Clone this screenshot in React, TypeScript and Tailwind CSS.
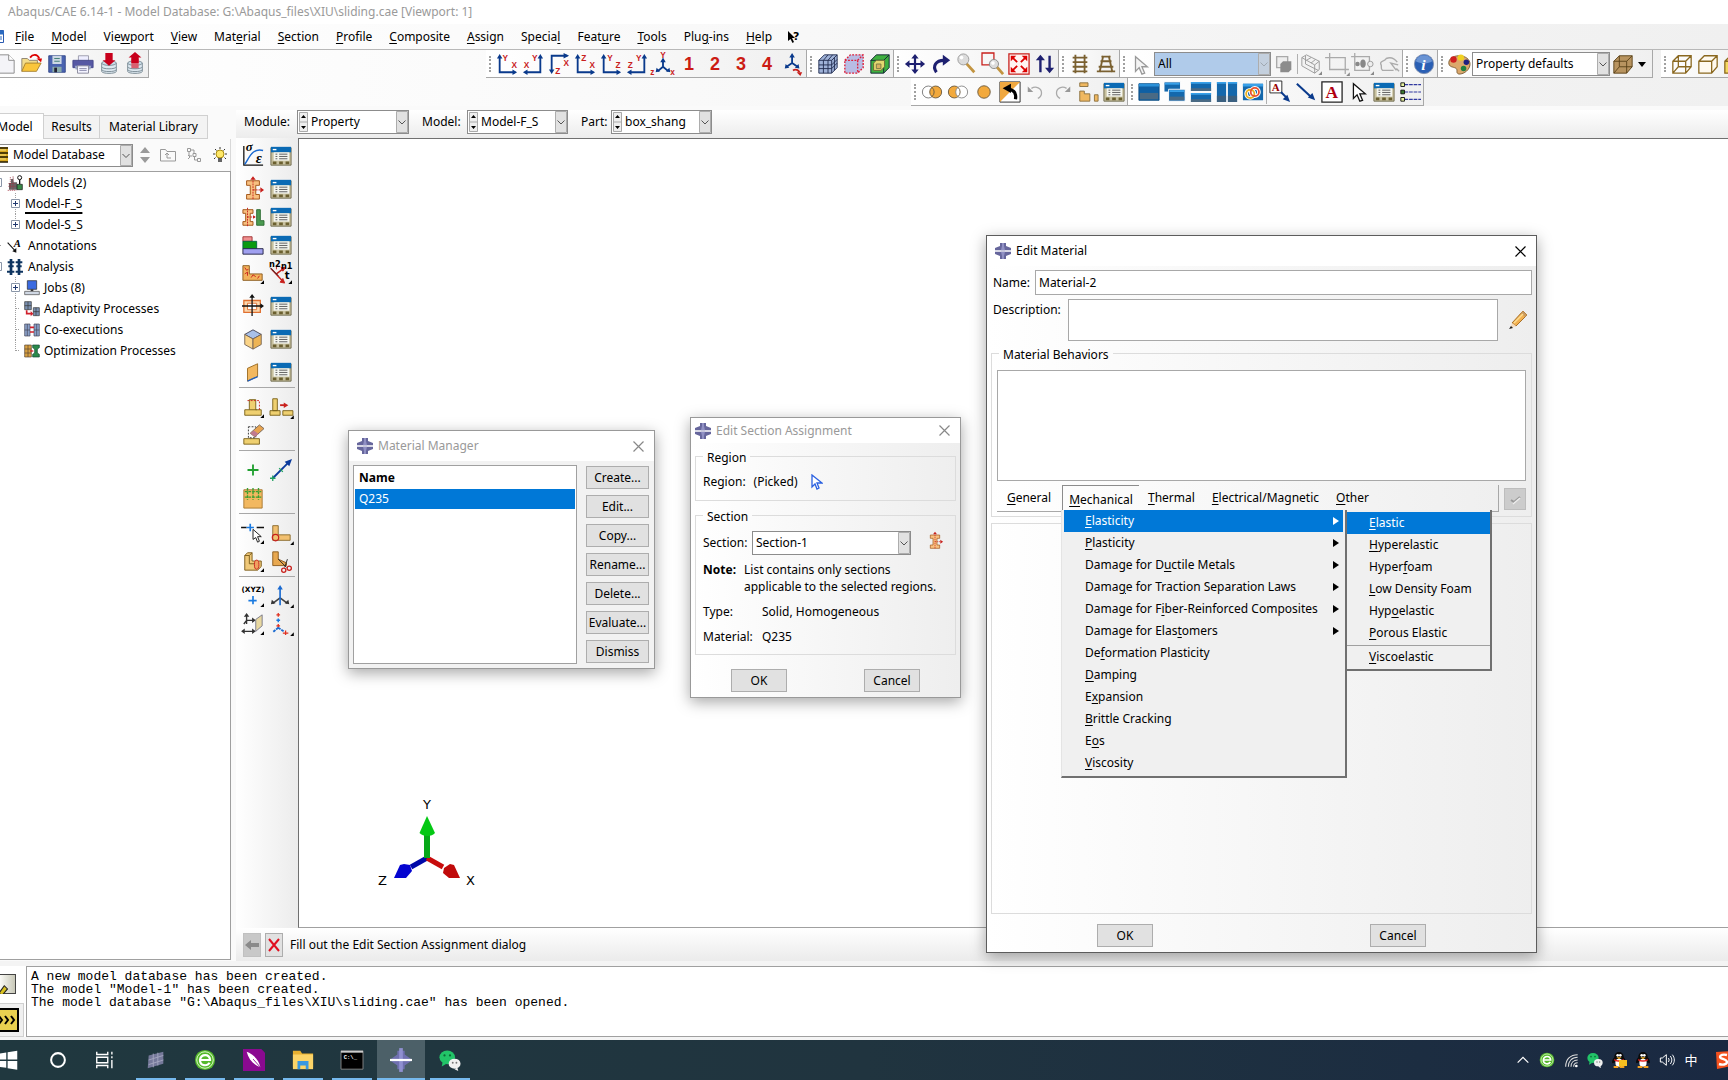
import { useState } from 'react';
import type { ReactNode } from 'react';

type IconProps = { children: ReactNode; size?: 'sm' | 'md' };

// 24 unit grid shared by all toolbar icons
function Icon({ children, size = 'md' }: IconProps)
{
    return (
        <svg className={size === 'sm' ? 'w-4 h-4 shrink-0 overflow-visible' : 'w-6 h-6 shrink-0 overflow-visible'} viewBox="0 0 24 24" fill="none" aria-hidden="true">
            {children}
        </svg>
    );
}

// "&File" -> underlined F
function Mnemonic({ text }: { text: string })
{
    const i = text.indexOf('&');
    if (i < 0) return <>{text}</>;
    return (
        <span className="whitespace-pre">
            {text.slice(0, i)}
            <span className="underline underline-offset-2">{text[i + 1]}</span>
            {text.slice(i + 2)}
        </span>
    );
}

function AbaqusMark()
{
    return (
        <svg className="w-4 h-4 shrink-0" viewBox="0 0 16 16" aria-hidden="true">
            <path d="M5 0h6v3l5 2v2.300H0V5l5-2z" fill="#66669c" />
            <path d="M7 0h2v3l1 4.300H6L7 3z" fill="#9090c4" />
            <path d="M5 16h6v-3l5-2V8.700H0V11l5 2z" fill="#66669c" />
            <path d="M7 16h2v-3l1-4.300H6L7 13z" fill="#9090c4" />
        </svg>
    );
}

const NAVY = '#0a3a8c';
const RED = '#c8201c';

const AxisText = ({ x, y, t }: { x: number; y: number; t: string }) => (
    <text x={x} y={y} fontSize="9" fontWeight="bold" fontFamily="Liberation Sans, sans-serif" fill={RED}>{t}</text>
);

const icons: Record<string, ReactNode> = {
    blank: <><path d="M3 2h13l6 6v14H3z" fill="#f4f4f8" stroke="#888" /><path d="M16 2v6h6" stroke="#888" fill="#fff" /></>,
    open: <><path d="M2 20V6h6l2 2h9v4" fill="#f3dc8a" stroke="#8a8070" /><path d="M2 20l4-9h17l-5 9z" fill="#fbc63c" stroke="#a58030" /><path d="M11 5c3-4 8-4 10 1" stroke="#d00" strokeWidth="2" /><path d="M18 6h6l-1 4z" fill="#d00" /></>,
    save: <><path d="M3 3h18v18H3z" fill="#4a63b0" stroke="#33488a" /><path d="M7 3h10v9H7z" fill="#cdd8e4" /><path d="M9 6h6M9 9h6" stroke="#3a7a70" /><path d="M7 15h10v6H7z" fill="#8aa" /><path d="M9 16h3v5H9z" fill="#223" /></>,
    print: <><path d="M7 3h11v6H7z" fill="#eef" stroke="#99a" /><path d="M1 8h22v8H1z" fill="#5658a4" stroke="#44468a" /><path d="M3 14h18l-1 4H4z" fill="#9aa6c8" /><path d="M6 14h12v8H6z" fill="#f4f4ff" stroke="#889" /><path d="M8 17h8M8 19h8" stroke="#88a" /></>,
    dbIn: <><path d="M4 11v9c0 3 16 3 16 0v-9" fill="#dde8f0" stroke="#7a8a94" /><ellipse cx="12" cy="11" rx="8" ry="2.500" fill="#c9dbe6" stroke="#7a8a94" /><path d="M4 15c0 3 16 3 16 0M4 18c0 3 16 3 16 0" stroke="#7a8a94" /><path d="M8 0h8v8h3l-7 6-7-6h3z" fill="#c8001c" /></>,
    dbOut: <><path d="M4 11v9c0 3 16 3 16 0v-9" fill="#dde8f0" stroke="#7a8a94" /><ellipse cx="12" cy="11" rx="8" ry="2.500" fill="#c9dbe6" stroke="#7a8a94" /><path d="M8 6h8v11H8z" fill="#d86070" /><path d="M4 15c0 3 16 3 16 0M4 18c0 3 16 3 16 0" stroke="#7a8a94" /><path d="M12-1l7 6h-3v6H8V5H5z" fill="#c8001c" /></>,
    yx: <><path d="M4 4v17h17" stroke={NAVY} strokeWidth="2" /><path d="M1 6l3-5 3 5zM18 18l5 3-5 3z" fill={NAVY} /><AxisText x={7} y={9} t="Y" /><AxisText x={17} y={16} t="X" /></>,
    xy: <><path d="M20 4v17H4" stroke={NAVY} strokeWidth="2" /><path d="M17 6l3-5 3 5zM6 18l-5 3 5 3z" fill={NAVY} /><AxisText x={11} y={9} t="Y" /><AxisText x={2} y={16} t="X" /></>,
    xz: <><path d="M4 20V3h17" stroke={NAVY} strokeWidth="2" /><path d="M1 18l3 5 3-5zM17 0l6 3-6 3z" fill={NAVY} /><AxisText x={17} y={14} t="X" /><AxisText x={8} y={23} t="Z" /></>,
    zx: <><path d="M4 4v17h17" stroke={NAVY} strokeWidth="2" /><path d="M1 6l3-5 3 5zM18 18l5 3-5 3z" fill={NAVY} /><AxisText x={8} y={9} t="Z" /><AxisText x={17} y={16} t="X" /></>,
    yz: <><path d="M4 4v17h17" stroke={NAVY} strokeWidth="2" /><path d="M1 6l3-5 3 5zM18 18l5 3-5 3z" fill={NAVY} /><AxisText x={8} y={9} t="Y" /><AxisText x={17} y={16} t="Z" /></>,
    zy: <><path d="M20 4v17H4" stroke={NAVY} strokeWidth="2" /><path d="M17 6l3-5 3 5zM6 18l-5 3 5 3z" fill={NAVY} /><AxisText x={11} y={9} t="Y" /><AxisText x={2} y={16} t="Z" /></>,
    iso: <><path d="M12 15V8M12 15l-6 5M12 15l6 5" stroke={NAVY} strokeWidth="2" /><path d="M9 10l3-5 3 5zM4 21l1-5 4 4zM20 21l-1-5-4 4z" fill={NAVY} /><AxisText x={9} y={5} t="Y" /><AxisText x={-2} y={24} t="z" /><AxisText x={20} y={24} t="x" /></>,
    rotView: <><path d="M11 11V3M11 11l-6 4M11 11l6 4" stroke={NAVY} strokeWidth="2" /><path d="M8 5l3-5 3 5zM3 17l1-5 4 4zM19 17l-1-5-4 4z" fill={NAVY} /><path d="M12 19c3-2 6 0 7 2" stroke={RED} strokeWidth="2" /><path d="M16 21h6l-2 4z" fill={RED} /></>,
    meshCube: <><path d="M2 8l6-6h14v14l-6 6H2z" fill="#9fb2d8" stroke="#222d50" /><path d="M2 8h14v14M16 8l6-6M2 13h14M2 17h14M7 8v14M12 8v14M7 8l5-6M12 8l5-6M19 5v14M16 13l6-6M16 17l6-6" stroke="#222d50" /></>,
    dashCube: <><path d="M2 8l6-6h14v14l-6 6H2z" fill="#b8bce4" /><path d="M2 8l6-6h14v14l-6 6H2zM2 8h14v14M16 8l6-6" stroke="#e0203a" strokeWidth="1.500" strokeDasharray="2 1.500" /></>,
    greenCube: <><path d="M2 8l6-6h14v14l-6 6H2z" fill="#3eb040" stroke="#123" /><path d="M2 8h14v14M16 8l6-6" stroke="#123" /><path d="M5 11l3-3h9v7l-4 4H5z" fill="#e4d870" stroke="#663" /><path d="M8 12h5v5H8z" fill="#d8b060" stroke="#774" /></>,
    pan: <><path d="M12 3v18M3 12h18" stroke="#1e2070" strokeWidth="2.400" /><path d="M8 6l4-5 4 5zM8 18l4 5 4-5zM6 8l-5 4 5 4zM18 8l5 4-5 4z" fill="#1e2070" /></>,
    rotate: <><path d="M7 21C2 14 7 8 15 8" stroke="#1e2070" strokeWidth="3.400" /><path d="M14 2l8 6-8 6z" fill="#1e2070" /></>,
    zoom: <><path d="M11 11l9 10" stroke="#c29440" strokeWidth="3" /><circle cx="8" cy="7" r="6" fill="#dcdcdc" stroke="#999" /><circle cx="6" cy="5" r="2" fill="#fff" /></>,
    boxZoom: <><path d="M0 0h13v13H0z" stroke={RED} strokeWidth="1.400" /><path d="M16 15l7 8" stroke="#c29440" strokeWidth="3" /><circle cx="13" cy="12" r="5" fill="#dcdcdc" stroke="#888" /><circle cx="12" cy="11" r="2" fill="#fff" /></>,
    fit: <><path d="M1 1h22v22H1z" stroke={RED} strokeWidth="1.400" fill="#fff4f2" /><path d="M5 5l5 5M19 5l-5 5M5 19l5-5M19 19l-5-5" stroke="#d00" strokeWidth="2" /><path d="M3 3h6L3 9zM21 3h-6l6 6zM3 21h6l-6-6zM21 21h-6l6-6z" fill="#d00" /></>,
    cycle: <><path d="M7 6v15M17 3v15" stroke="#1e2070" strokeWidth="2.600" /><path d="M2 8l5-6 5 6zM12 16l5 6 5-6z" fill="#1e2070" /></>,
    parallel: <path d="M7 2v20M17 2v20M4 5h16M4 10h16M4 15h16M4 20h16" stroke="#7a6030" strokeWidth="2" />,
    perspective: <path d="M9 3L5 21M15 3l4 18M7 4h10M6 9h12M4 15h16M2 20h20" stroke="#7a6030" strokeWidth="2" />,
    ghostCursor: <path d="M6 4v16l4-4 3 7 3-1-3-7h6z" fill="#f4f4f4" stroke="#999" strokeWidth="1.400" />,
    ghostSel: <><path d="M4 4h12v12H4z" stroke="#aaa" fill="#eee" strokeWidth="1.500" /><path d="M8 12l3-3h9v9l-3 3H8z" fill="#8c8c8c" /></>,
    ghostCube: <><path d="M2 5l5-3 14 7v9l-5 4L2 14z" stroke="#999" fill="#f2f2f2" /><path d="M2 5l14 8v9M16 13l5-4M6 3v9l14 7M7 8l5-3M12 11l5-4" stroke="#999" /><path d="M24 20v4h-4z" fill="#888" /></>,
    ghostBox: <><path d="M4 5h17v13H4zM4 0v9M-1 5h9M21 14v9M16 18h9" stroke="#aaa" strokeWidth="1.400" /><path d="M26 21v4h-4z" fill="#888" /></>,
    ghostNodes: <><path d="M3 4h16v15H3zM3 0v8M-1 4h8" stroke="#aaa" strokeWidth="1.400" /><circle cx="6" cy="12" r="2.500" fill="#888" /><path d="M12 7c4 0 4 9 0 9s-4-9 0-9z" fill="#888" /><circle cx="20" cy="12" r="3" fill="#eee" stroke="#999" /><path d="M24 20v4h-4z" fill="#888" /></>,
    ghostLasso: <path d="M20 17l3 3M22 13l-8-2 6 8M17 19H5c-3-2 0-4-2-7-1-4 4-2 6-6 5-2 9 0 12 4" stroke="#aaa" strokeWidth="1.500" />,
    info: <><circle cx="12" cy="12" r="10.500" fill="#2a5fb4" stroke="#8090b0" /><path d="M3 9a9.500 9.500 0 0 1 18 0c-5 3-12 3-18 0z" fill="#6a94d4" /><text x="9" y="18" fontSize="17" fontStyle="italic" fontWeight="bold" fontFamily="Liberation Serif, serif" fill="#fff">i</text></>,
    palette: <><path d="M12 3C5 3 0 7 1 12c1 4 6 3 8 5s-1 5 3 6c6 0 12-5 12-11 0-5-5-9-12-9z" fill="#dca86c" stroke="#7a5a30" /><circle cx="6" cy="7" r="3.500" fill="#d02020" /><circle cx="14" cy="5" r="3.500" fill="#f0d020" /><circle cx="20" cy="10" r="3" fill="#202080" /><circle cx="17" cy="17" r="3" fill="#208040" /></>,
    brownCube: <><path d="M2 9l6-6h14v12l-6 7H2z" fill="#b89460" stroke="#5a4218" /><path d="M2 9h14v13M16 9l6-6M8 3v12l-6 7M8 15h14" stroke="#5a4218" /></>,
    wireCube: <path d="M2 9l6-6h14v12l-6 7H2zM2 9h14v13M16 9l6-6M8 3v12l-6 7M8 15h14" stroke="#8a6820" strokeWidth="1.400" />,
    hiddenCube: <path d="M2 9l6-6h14v12l-6 7H2zM2 9h14v13M16 9l6-6" stroke="#8a6820" strokeWidth="1.400" fill="#fffaf0" />,
    solidCube: <path d="M2 9l6-6h14v12l-6 7H2zM2 9h14v13M16 9l6-6" stroke="#8a6820" strokeWidth="1.400" fill="#f4d860" />,
    union: <><circle cx="8" cy="12" r="6.500" fill="#fff" stroke="#777" /><circle cx="16" cy="12" r="6.500" fill="#f2a93c" stroke="#6a5a40" /><path d="M12 7a6.500 6.500 0 0 1 0 10" stroke="#6a5a40" /></>,
    subtract: <><circle cx="8" cy="12" r="6.500" fill="#f2a93c" stroke="#6a5a40" /><circle cx="16" cy="12" r="6.500" fill="#fff" stroke="#888" /><path d="M12 7a6.500 6.500 0 0 1 0 10" stroke="#6a5a40" /></>,
    circle: <circle cx="12" cy="12" r="6.800" fill="#f2a93c" stroke="#6a5a40" />,
    replace: <><path d="M1 1h22v22H1z" fill="#fff" stroke="#222" /><path d="M1 1h22L1 23z" fill="#f0a840" /><path d="M18 20c1-6-1-10-7-11" stroke="#000" strokeWidth="3.500" /><path d="M4 8l9-5v10z" fill="#000" /></>,
    undo: <><path d="M7 8c5-3 11 0 11 5 0 3-2 5-4 6" stroke="#aaa" strokeWidth="1.400" /><path d="M3 6v6h6z" fill="#999" /></>,
    redo: <><path d="M17 8c-5-3-11 0-11 5 0 3 2 5 4 6" stroke="#aaa" strokeWidth="1.400" /><path d="M21 6v6h-6z" fill="#999" /></>,
    tree: <path d="M3 2h9v4H3zM3 11h5v3h6v8H3zM19 15h4v7h-4z" fill="#f0b860" stroke="#8a7040" />,
    vp1: <><path d="M1 3h22v18H1z" fill="#1060a4" stroke="#0a4a80" /><path d="M1 3h22v3H1z" fill="#2a90d8" /><path d="M2 13h20v7H2z" fill="#4a6a84" /></>,
    vp2: <><path d="M0 1h18v11H0z" fill="#1468ac" stroke="#fff" /><path d="M1 2h16v2H1z" fill="#38a0e8" /><path d="M5 9h18v13H5z" fill="#1468ac" stroke="#fff" /><path d="M6 10h16v2H6z" fill="#38a0e8" /><path d="M6 17h16v4H6z" fill="#4a6a84" /></>,
    vp3: <><path d="M1 1h22v10H1zM1 13h22v10H1z" fill="#1468ac" /><path d="M1 1h22v2H1zM1 13h22v2H1z" fill="#38a0e8" /><path d="M1 8h22v3H1zM1 20h22v3H1z" fill="#4a6a84" /></>,
    vp4: <><path d="M1 1h10v22H1zM13 1h10v22H13z" fill="#1468ac" /><path d="M1 1h10v2H1zM13 1h10v2H13z" fill="#38a0e8" /><path d="M1 16h10v7H1zM13 16h10v7H13z" fill="#3a6080" /></>,
    vpLink: <><path d="M1 3h22v18H1z" fill="#1468ac" /><path d="M1 3h22v3H1z" fill="#38a0e8" /><circle cx="9" cy="14" r="4.500" stroke="#fff" strokeWidth="4" /><circle cx="14" cy="12" r="4.500" stroke="#fff" strokeWidth="4" /><circle cx="9" cy="14" r="4.500" stroke="#e8b020" strokeWidth="2" /><circle cx="14" cy="12" r="4.500" stroke="#e85030" strokeWidth="2" /></>,
    annot: <><path d="M1 0h13v13H1z" fill="#fff" stroke="#222" /><text x="3" y="11" fontSize="12" fontWeight="bold" fontFamily="Liberation Serif, serif" fill="#900">A</text><path d="M13 12l6 6" stroke={NAVY} strokeWidth="2" /><path d="M23 23l-8-3 5-5z" fill={NAVY} /></>,
    arrow: <><path d="M2 3l15 14" stroke={NAVY} strokeWidth="2.200" /><path d="M22 21l-8-3 5-5z" fill={NAVY} /></>,
    letter: <><path d="M1 1h22v22H1z" fill="#fff" stroke="#222" strokeWidth="1.400" /><text x="5" y="18" fontSize="19" fontWeight="bold" fontFamily="Liberation Serif, serif" fill="#b00010">A</text></>,
    cursor: <path d="M7 3v16l4-4 3 7 3-1-3-7h6z" fill="#fff" stroke="#111" strokeWidth="1.400" />,
    list: <><path d="M6 4h18M6 12h18M6 20h18" stroke="#3038a0" strokeWidth="1.300" strokeDasharray="4 1" /><path d="M2 2h4v4H2zM2 18h4v4H2z" fill="#e8f4a0" stroke="#111" /><path d="M2 10h4v4H2z" fill="#3a7a30" stroke="#111" /></>,
    table: <><path d="M1 3h22v19H1z" fill="#c9c2a0" stroke="#6b6748" /><path d="M1 2h22v6H1z" fill="#0a6ab4" /><path d="M3 5h4" stroke="#fff" strokeWidth="1.500" /><path d="M4 8h17v9H4z" fill="#f4f6f0" /><path d="M6 10h2M6 12.500h2M6 15h2M10 10h9M10 12.500h9M10 15h9" stroke="#555" /><path d="M3 18h4v3H3zM10 18h4v3h-4zM17 18h4v3h-4z" fill="#6b6030" /></>,
    curve: <><path d="M2 1v21h21" stroke="#111" strokeWidth="1.400" /><path d="M3 21C8 14 11 3 23 6" stroke="#1a6ad0" strokeWidth="1.600" /><text x="4" y="7" fontSize="14" fontStyle="italic" fontWeight="bold" fontFamily="Liberation Serif, serif" fill="#000">σ</text><text x="15" y="20" fontSize="16" fontStyle="italic" fontWeight="bold" fontFamily="Liberation Serif, serif" fill="#000">ε</text></>,
    section: <><path d="M5 3h14v5h-4v10h4v5H5v-5h4V8H5z" fill="#f8c080" stroke="#a05010" /><path d="M12 0v23M12 13h11" stroke={RED} strokeDasharray="2 1" /><path d="M9 2l3-4 3 4zM20 10l4 3-4 3z" fill={RED} /></>,
    assign: <><path d="M1 4h11v4H9v9h3v4H1v-4h3V8H1z" fill="#f8c080" stroke="#a05010" /><path d="M6 2v21M6 12h8" stroke={RED} strokeDasharray="2 1" /><path d="M12 10l3 2-3 2z" fill={RED} /><path d="M16 4h4v12h4v5h-8z" fill="#4a9a50" stroke="#2a6a30" /></>,
    ply: <><path d="M1 3h10v5H1z" fill="#f09090" stroke="#a03030" /><path d="M1 8h15v8H1z" fill="#0a9a10" stroke="#064" /><path d="M1 16h22v6H1z" fill="#a0a0f0" stroke="#224" /></>,
    beam: <><path d="M1 4h7v9h14v7H1z" fill="#f2b25c" stroke="#8a5a1c" /><path d="M3 6l2 3 2-1M3 13l3-2v4M10 17l2-3 3 2M17 18l2-3" stroke={RED} /><path d="M24 20v4h-4z" fill="#000" /></>,
    tangent: <><path d="M1 7l14 15M7 13l8-6" stroke={RED} strokeWidth="1.600" /><path d="M0 6l9 9" stroke="#222" /><path d="M16 23l-5-1 3-4zM17 6l-5 0 2 4zM7 8V5" fill={RED} stroke={RED} /><text x="-1" y="5" fontSize="9" fontWeight="bold" fontFamily="DejaVu Sans, sans-serif" fill="#000">n2</text><text x="12" y="8" fontSize="9" fontWeight="bold" fontFamily="DejaVu Sans, sans-serif" fill="#000">n1</text><text x="16" y="19" fontSize="11" fontWeight="bold" fontFamily="DejaVu Sans, sans-serif" fill="#000">t</text><path d="M24 20v4h-4z" fill="#000" /></>,
    orient: <><path d="M2 6h18v13H2z" fill="#fbd9b0" stroke="#e07030" strokeWidth="1.400" /><path d="M6 9h10v7H6z" fill="#fff" stroke="#e07030" /><path d="M11 1v22M0 12h22" stroke="#111" strokeWidth="1.400" /><path d="M8 3l3-4 3 4zM20 9l4 3-4 3z" fill="#111" /></>,
    cube: <><path d="M12 2l9 5-9 5-9-5z" fill="#a8c0e8" stroke="#445" /><path d="M3 7l9 5v11l-9-5z" fill="#fbd488" stroke="#765" /><path d="M21 7l-9 5v11l9-5z" fill="#eeb454" stroke="#765" /></>,
    plane: <><path d="M6 8l11-5v14L6 22z" fill="#f2b860" stroke="#9a6a20" /><path d="M6 22l11-5" stroke="#2060c0" strokeWidth="1.500" /></>,
    extrude: <><path d="M8 4h7v11h6v6H3v-6h5z" fill="#efd070" stroke="#7a6018" /><path d="M6 5h13v11" stroke={RED} strokeDasharray="2 1.500" /><path d="M8 15h8" stroke="#7a6018" /><path d="M24 20v4h-4z" fill="#000" /></>,
    extend: <><path d="M3 3h5v13H3zM0 16h11v5H0zM14 16h11v5H14z" fill="#efd070" stroke="#7a6018" /><path d="M11 10h6" stroke={RED} strokeWidth="2" /><path d="M15 7l5 3-5 3z" fill={RED} /><path d="M26 21v4h-4z" fill="#000" /></>,
    erase: <><path d="M2 16h17v6H2z" fill="#efd070" stroke="#7a6018" /><path d="M7 3h8v12H7z" stroke="#333" strokeDasharray="2 1.500" /><path d="M9 10l10-9 5 4-10 9z" fill="#e8a450" stroke="#765" /><path d="M9 10l4-3 5 4-4 3z" fill="#c07a90" /></>,
    plus: <path d="M12 6v12M6 12h12" stroke="#20a030" strokeWidth="2" />,
    line: <><path d="M3 21L20 4" stroke="#0a3a9c" strokeWidth="2" /><path d="M24 0l-3 8-5-5z" fill="#0a3a9c" /><path d="M3 18v6M0 21h6M10 10l4 4" stroke="#20a060" strokeWidth="1.400" /></>,
    grid: <><path d="M2 3h20v20H2z" fill="#f2b860" stroke="#a87830" /><path d="M6 1v13M12 1v13M18 1v13M3 5h18M3 11h18" stroke="#3aa030" strokeWidth="1.500" strokeDasharray="3 1" /></>,
    pick: <><path d="M-1 6h6M16 6h8" stroke="#111" strokeWidth="1.600" /><path d="M9 2v8M5 6h8" stroke="#1a7ae0" strokeWidth="1.800" /><path d="M12 8v11l3-2 2 5 2-1-2-5h4z" fill="#fff" stroke="#111" /><path d="M24 20v4h-4z" fill="#000" /></>,
    corner: <><path d="M3 4h6v10h13v6H3z" fill="#f2c070" stroke="#8a6a2c" /><circle cx="6" cy="17" r="3.500" stroke={RED} strokeWidth="1.300" /><path d="M26 21v4h-4z" fill="#000" /></>,
    partition: <><path d="M3 6l3-3h5v9h10v6l-4 4H3z" fill="#efc878" stroke="#7a5a18" /><path d="M3 6h5v9h10M8 6l3-3" stroke="#7a5a18" /><ellipse cx="16" cy="16" rx="2.500" ry="5" stroke={RED} fill="#f0a060" /><path d="M24 20v4h-4z" fill="#000" /></>,
    cut: <><path d="M3 2h6v8l9 4v3H3z" fill="#e8a850" stroke="#8a5a1c" /><path d="M9 10l9 9M19 10l-3 9" stroke="#222" /><circle cx="15" cy="22" r="2.300" stroke={RED} strokeWidth="1.400" /><circle cx="21" cy="20" r="2.300" stroke={RED} strokeWidth="1.400" /></>,
    xyz: <><text x="12" y="8" textAnchor="middle" fontSize="8" fontWeight="bold" fontFamily="DejaVu Sans, sans-serif" fill="#000">(XYZ)</text><path d="M12 12v9M7 17h9" stroke="#1a7ae0" strokeWidth="1.800" /><path d="M24 20v4h-4z" fill="#000" /></>,
    csys: <><path d="M11 14l-8 6M11 14l8 6" stroke="#444" strokeWidth="1.800" /><path d="M11 22V3" stroke="#1a6ad0" strokeWidth="1.800" /><path d="M8 5l3-5 3 5z" fill="#1a6ad0" /><path d="M1 21l1-5 4 4zM21 21l-1-5-4 4z" fill="#333" /><path d="M26 21v4h-4z" fill="#000" /></>,
    planeAxes: <><path d="M5 12V3M5 8h8M2 12l3-4M2 20h10" stroke="#333" strokeWidth="1.500" /><path d="M2 4l3-4 3 4zM11 5l4 3-4 3zM3 17l-4 3 4 3zM11 17l4 3-4 3z" fill="#333" /><path d="M15 7l7-5v12l-7 6z" fill="#e8d8a0" stroke="#778" /><path d="M24 20v4h-4z" fill="#000" /></>,
    points: <><path d="M9 0v4M7 2h4M9 12v4M7 14h4M17 19v5M14 22h6" stroke="#e03020" strokeWidth="1.400" /><path d="M9 6v4M7 8h4" stroke="#1a7ae0" strokeWidth="1.600" /><path d="M9 16l-6 5M9 16l6 4" stroke="#1a6ad0" strokeWidth="2" strokeDasharray="3 1" /><path d="M26 21v4h-4z" fill="#000" /></>,
    console: <><path d="M0 2h24v20H0z" fill="#000" stroke="#888" /><path d="M0 2h24v2H0z" fill="#ccc" /><text x="3" y="11" fontSize="6" fontWeight="bold" fontFamily="Liberation Mono, monospace" fill="#fff">C:\_</text></>,
};

function ToolButton({ name }: { name: string })
{
    return (
        <button type="button" aria-label={name} className="w-[26px] h-[27px] shrink-0 flex items-center justify-center">
            {/^\d$/.test(name)
                ? <span className="font-['Liberation_Sans',sans-serif] text-lg font-bold text-[#cc1c14]">{name}</span>
                : <svg className="w-[22px] h-[22px] overflow-visible" viewBox="0 0 24 24" fill="none" aria-hidden="true">{icons[name]}</svg>}
        </button>
    );
}

function ToolGroup({ names, children, handle = true, className = '' }: { names?: string[]; children?: ReactNode; handle?: boolean; className?: string })
{
    return (
        <div className={`h-7 flex items-center shrink-0 border-b border-r border-[#a8a8a8] bg-linear-to-r from-white to-[#f0f0f0] ${className}`}>
            {handle && <span className="w-2 h-4 shrink-0 flex justify-center"><span className="border-l-2 border-dotted border-[#a0a0a0]" /></span>}
            {names?.map((n) => <ToolButton key={n} name={n} />)}
            {children}
        </div>
    );
}

type SelectProps = { id: string; value: string; width: string; spinner?: boolean; tone?: string };

function Select({ id, value, width, spinner, tone = 'bg-white' }: SelectProps)
{
    return (
        <div className={`relative h-6 shrink-0 flex items-center border border-[#8c8c8c] ${tone} ${width}`}>
            {spinner && (
                <svg className="w-[9px] h-5 ml-px shrink-0 bg-[#eee]" viewBox="0 0 9 20" aria-hidden="true">
                    <path d="M.5.5h8v19h-8zM.5 10h8" fill="none" stroke="#aaa" />
                    <path d="M2 6h5L4.500 3zM2 14h5l-2.500 3z" fill="#000" />
                </svg>
            )}
            <select id={id} defaultValue={value} className="appearance-none w-full h-full pl-[3px] pr-3 bg-transparent outline-none">
                <option>{value}</option>
            </select>
            <svg className="absolute right-0 inset-y-0 w-3 h-full pointer-events-none" viewBox="0 0 12 22" aria-hidden="true">
                <path d="M.5.5h11v21H.5z" fill={tone === 'bg-white' ? '#e1e1e1' : '#c4d0de'} stroke="#adadad" />
                <path d="M2.500 9.500L6 13l3.500-3.500" fill="none" stroke={tone === 'bg-white' ? '#555' : '#a0a8b0'} />
            </svg>
        </div>
    );
}

function PushButton({ children, width = 'w-14' }: { children: ReactNode; width?: string })
{
    return <button type="button" className={`h-[23px] shrink-0 border border-[#adadad] bg-[#e1e1e1] leading-none whitespace-nowrap ${width}`}>{children}</button>;
}

const mainMenu = ['&File', '&Model', 'Vie&wport', '&View', 'Mat&erial', '&Section', '&Profile', '&Composite', '&Assign', 'Specia&l', 'Feat&ure', '&Tools', 'Plu&g-ins', '&Help'];

function Toolbars()
{
    return (
        <div className="bg-linear-to-r from-white to-[#f0f0f0] overflow-hidden">
            <div className="flex border-t border-[#b8b8b8]">
                <ToolGroup handle={false} className="-ml-2" names={['blank', 'open', 'save', 'print', 'dbIn', 'dbOut']} />
                <ToolGroup className="ml-[337px]" names={['yx', 'xy', 'xz', 'zx', 'yz', 'zy', 'iso', '1', '2', '3', '4', 'rotView']} />
                <ToolGroup names={['meshCube', 'dashCube', 'greenCube']} />
                <ToolGroup names={['pan', 'rotate', 'zoom', 'boxZoom', 'fit', 'cycle']} />
                <ToolGroup names={['parallel', 'perspective']} />
                <ToolGroup>
                    <ToolButton name="ghostCursor" />
                    <label htmlFor="filter" className="sr-only">Selection filter</label>
                    <Select id="filter" value="All" width="w-[117px]" tone="bg-[#b0cbea]" />
                    <ToolButton name="ghostSel" />
                    <span className="w-px h-5 bg-[#b0b0b0]" />
                    {['ghostCube', 'ghostBox', 'ghostNodes', 'ghostLasso'].map((n) => <ToolButton key={n} name={n} />)}
                </ToolGroup>
                <ToolGroup names={['info']} />
                <ToolGroup names={['palette']}>
                    <label htmlFor="colors" className="sr-only">Color mapping</label>
                    <Select id="colors" value="Property defaults" width="w-[138px]" />
                    <ToolButton name="brownCube" />
                    <svg className="w-3 h-3 mr-1" viewBox="0 0 12 12" aria-hidden="true"><path d="M2 4h8L6 9z" fill="#000" /></svg>
                </ToolGroup>
                <ToolGroup className="ml-2" names={['wireCube', 'hiddenCube', 'solidCube']} />
            </div>
            <div className="flex">
                <ToolGroup className="ml-[911px]" names={['union', 'subtract', 'circle', 'replace', 'undo', 'redo', 'tree', 'table']} />
                <ToolGroup names={['vp1', 'vp2', 'vp3', 'vp4', 'vpLink']}>
                    <span className="w-px h-6 bg-[#b0b0b0]" />
                    {['annot', 'arrow', 'letter', 'cursor', 'table', 'list'].map((n) => <ToolButton key={n} name={n} />)}
                </ToolGroup>
            </div>
        </div>
    );
}

const treeIcons: Record<string, ReactNode> = {
    models: <><path d="M3 22V12h3V6h3V1l1 10h5v11z" fill="#666" /><path d="M1 23h13M5 3v18M9 2v20M2 13h12M2 17h12" stroke="#a03040" strokeDasharray="2 1" /><circle cx="19" cy="4" r="3" stroke="#111" strokeWidth="1.500" /><path d="M19 7v7" stroke="#111" strokeWidth="2" /><path d="M15 14h8v8h-8z" fill="#3a8a4a" stroke="#111" /></>,
    annotations: <><path d="M1 7l12 13" stroke="#111" strokeWidth="1.600" /><path d="M14 22v-7l-6 5z" fill="#111" /><text x="10" y="13" fontSize="16" fontWeight="bold" fontStyle="italic" fontFamily="Liberation Serif, serif" fill="#000">A</text></>,
    analysis: <><path d="M6 0v24M18 0v24" stroke="#0e3560" strokeWidth="4" /><path d="M1 5h10M13 5h10M2 11h8M14 11h8M0 19h11M13 19h11" stroke="#0e3560" strokeWidth="3" /></>,
    jobs: <><path d="M5 1h14v13H5z" fill="#3a6ae0" stroke="#222" /><path d="M10 14h4v3h-4z" fill="#333" /><path d="M1 17h22v5H1z" fill="#d0d8e4" stroke="#444" /></>,
    adaptivity: <><path d="M1 1h10v12H1z" fill="#7a90b0" stroke="#333" /><path d="M14 10h9v12h-9z" fill="#7a90b0" stroke="#333" /><path d="M6 1v12M1 7h10M18 10v12M14 16h9" stroke="#333" /><path d="M4 14v5h8" stroke="#d0202c" strokeWidth="2.500" /><path d="M10 15l4 4-4 4z" fill="#d0202c" /></>,
    coexec: <><path d="M1 3h8v18H1zM15 3h8v18h-8z" fill="#8aa0c8" stroke="#445" /><path d="M5 3v18M19 3v18M1 12h8M15 12h8" stroke="#445" /><path d="M9 8h6M9 15h6" stroke="#d0202c" strokeWidth="2.500" /></>,
    optim: <><path d="M1 3h10v18H1z" fill="#d8a040" stroke="#543" /><path d="M1 9h10M1 15h10M6 3v18" stroke="#543" /><path d="M13 3h10v4l-3 2v6l3 2v4H13v-4l3-2V9l-3-2z" fill="#2a8a4a" stroke="#143" /><path d="M9 12h5" stroke="#d0202c" strokeWidth="2" /></>,
};

type BranchKind = 'edge' | 'stub' | 'plus' | 'plusLast' | 'leaf' | 'leafLast';

// One tree row's worth of connector lines, with the expand box where there is one
function Branch({ kind }: { kind: BranchKind })
{
    if (kind === 'edge' || kind === 'stub')
    {
        return (
            <svg className="w-0.5 h-[21px] shrink-0" viewBox="0 0 2 21" fill="none" aria-hidden="true">
                {kind === 'edge' ? <path d="M0 6.500h1.500v8H0" stroke="#8a96a8" /> : <path d="M0 10.500h1" stroke="#a0a0a0" />}
            </svg>
        );
    }
    const last = kind === 'plusLast' || kind === 'leafLast';
    return (
        <svg className="w-[9px] h-[21px] shrink-0" viewBox="0 0 9 21" fill="none" aria-hidden="true">
            <path d={last ? 'M4.500 0v11' : 'M4.500 0v21'} stroke="#a0a0a0" strokeDasharray="1 1" />
            {kind.startsWith('leaf')
                ? <path d="M5 10.500h4" stroke="#a0a0a0" strokeDasharray="1 1" />
                : <><path d="M.5 6.500h8v8h-8z" fill="#fff" stroke="#8a96a8" /><path d="M2 10.500h5M4.500 8v5" stroke="#223a70" /></>}
        </svg>
    );
}

const treeRows: { label: string; icon?: string; row: string; branch: BranchKind; current?: boolean }[] = [
    { label: 'Models (2)', icon: 'models', row: 'gap-[5px]', branch: 'edge' },
    { label: 'Model-F_S', row: 'pl-[11px] gap-[5px]', branch: 'plus', current: true },
    { label: 'Model-S_S', row: 'pl-[11px] gap-[5px]', branch: 'plusLast' },
    { label: 'Annotations', icon: 'annotations', row: 'gap-[5px]', branch: 'stub' },
    { label: 'Analysis', icon: 'analysis', row: 'gap-[5px]', branch: 'edge' },
    { label: 'Jobs (8)', icon: 'jobs', row: 'pl-[11px] gap-1', branch: 'plus' },
    { label: 'Adaptivity Processes', icon: 'adaptivity', row: 'pl-[11px] gap-1', branch: 'leaf' },
    { label: 'Co-executions', icon: 'coexec', row: 'pl-[11px] gap-1', branch: 'leaf' },
    { label: 'Optimization Processes', icon: 'optim', row: 'pl-[11px] gap-1', branch: 'leafLast' },
];

function ModelTree()
{
    return (
        <aside className="w-[231px] shrink-0 flex flex-col pt-[7px] pb-px">
            <div role="tablist" className="h-[26px] flex items-end overflow-hidden">
                <button role="tab" type="button" aria-selected="true" className="-ml-2.5 w-[54px] h-[26px] pr-1 border border-b-0 border-[#d0d0d0] bg-white">Model</button>
                <button role="tab" type="button" className="w-14 h-6 border border-l-0 border-[#d0d0d0] bg-[#f3f3f3]">Results</button>
                <button role="tab" type="button" className="w-[108px] h-6 border border-l-0 border-[#d0d0d0] bg-[#f3f3f3]">Material Library</button>
            </div>
            <div className="h-8 flex items-center border-r border-[#d8d8d8]">
                <div className="flex items-center w-[134px] h-[23px] -ml-px border border-[#8c8c8c] bg-white">
                    <svg className="w-2.5 h-4 shrink-0" viewBox="0 0 10 16" aria-hidden="true">
                        <path d="M0 0h8v15H0z" fill="#d8a820" /><path d="M0 1h8M0 6h8M0 10h8M0 15h8" stroke="#221a00" strokeWidth="1.500" /><path d="M0 3h6M0 8h6M0 12h6" stroke="#f8e080" />
                    </svg>
                    <div className="relative flex-1 h-full">
                        <label htmlFor="tree-root" className="sr-only">Tree root</label>
                        <select id="tree-root" className="appearance-none w-full h-full pl-[3px] bg-transparent outline-none"><option>Model Database</option></select>
                        <svg className="absolute right-0 inset-y-0 w-3 h-full pointer-events-none" viewBox="0 0 12 21" aria-hidden="true">
                            <path d="M.5.5h11v20H.5z" fill="#e1e1e1" stroke="#adadad" /><path d="M2.500 9L6 12.500 9.500 9" fill="none" stroke="#555" />
                        </svg>
                    </div>
                </div>
                <div className="flex-1 flex items-center justify-between pl-[7px] pr-0.5">
                    <svg className="w-2.5 h-4" viewBox="0 0 10 16" aria-hidden="true"><path d="M0 6h10L5 0zM0 10h10l-5 6z" fill="#9a9a9a" /></svg>
                    <svg className="w-4 h-4" viewBox="0 0 16 16" fill="none" stroke="#999" aria-hidden="true"><path d="M.5 14V2.500h5L7 4.500h8.500V14z" /><path d="M5 8l2-2 2 2M7 6v5h4" /></svg>
                    <svg className="w-4 h-4" viewBox="0 0 16 16" fill="none" stroke="#999" aria-hidden="true"><path d="M1.500 1.500h3v3h-3zM7 6.500h3v3H7zM11.500 11.500h3v3h-3zM3 5v4h3M8.500 10v3H11M5 3h3v3M2 8l2 2-2 2" /></svg>
                    <svg className="w-4 h-4" viewBox="0 0 16 16" fill="none" aria-hidden="true"><circle cx="8" cy="7" r="4" fill="#ffe868" stroke="#a88a10" /><path d="M6 12h4M6 14h4" stroke="#333" strokeWidth="1.500" /><path d="M8 0v2M1 7h2M13 7h2M3 2l1.500 1.500M13 2l-1.500 1.500M2 12l1.500-1.500M14 12l-1.500-1.500" stroke="#333" /></svg>
                </div>
            </div>
            <ul className="flex-1 bg-white border border-l-0 border-[#a0a0a0]">
                {treeRows.map((r) => (
                    <li key={r.label} className={`h-[21px] flex items-center whitespace-nowrap ${r.row}`}>
                        <Branch kind={r.branch} />
                        {r.icon && <Icon size="sm">{treeIcons[r.icon]}</Icon>}
                        <span className={r.current ? 'underline decoration-2 underline-offset-4' : ''}>{r.label}</span>
                    </li>
                ))}
            </ul>
        </aside>
    );
}

const toolboxMain = [
    [['curve', 'table']],
    [['section', 'table'], ['assign', 'table'], ['ply', 'table'], ['beam', 'tangent']],
    [['orient', 'table']],
    [['cube', 'table']],
    [['plane', 'table']],
];

const toolboxMore = [
    [['extrude', 'extend'], ['erase', '']],
    [['plus', 'line'], ['grid', '']],
    [['pick', 'corner'], ['partition', 'cut']],
    [['xyz', 'csys'], ['planeAxes', 'points']],
];

function ToolboxRow({ row }: { row: string[] })
{
    return (
        <div className="flex h-7">
            {row.map((n, i) => n && (
                <button key={i} type="button" aria-label={n} className="w-7 h-7 flex items-center justify-center">
                    <svg className="w-[22px] h-[22px] overflow-visible" viewBox="0 0 24 24" fill="none" aria-hidden="true">{icons[n]}</svg>
                </button>
            ))}
        </div>
    );
}

function Toolbox()
{
    return (
        <div className="w-[62px] shrink-0 px-[3px] pt-1 bg-linear-to-r from-white to-[#ececec]">
            <div className="flex flex-col gap-[5px] pb-px border-b border-[#a8a8a8]">
                {toolboxMain.map((block, i) => <div key={i}>{block.map((row, j) => <ToolboxRow key={j} row={row} />)}</div>)}
            </div>
            {toolboxMore.map((block, i) => (
                <div key={i} className="pt-[5px] pb-px border-b border-[#a8a8a8] last:border-b-0">
                    {block.map((row, j) => <ToolboxRow key={j} row={row} />)}
                </div>
            ))}
        </div>
    );
}

function Triad()
{
    return (
        <svg className="w-[110px] h-[100px] ml-[74px] mb-[30px] overflow-visible" viewBox="0 0 110 100" fill="none" fontFamily="DejaVu Sans, sans-serif" fontSize="13" aria-label="View triad">
            <path d="M54 61L38 70" stroke="#0008a8" strokeWidth="5" />
            <path d="M54 61l16 9" stroke="#c80c0c" strokeWidth="5" />
            <path d="M54 61V36" stroke="#06a818" strokeWidth="6" />
            <path d="M46.500 36L54 19l8 17c-3 4-12 4-15.500 0z" fill="#04c814" />
            <path d="M21 81l6-13 4-1 6 1 2 6-6 7z" fill="#0404d0" />
            <path d="M87 81l-6-13-4-1-6 4-1 5 6 5z" fill="#c00a0a" />
            <g fill="#000">
                <text x="50" y="12">Y</text>
                <text x="5" y="88">Z</text>
                <text x="93" y="88">X</text>
            </g>
        </svg>
    );
}

type DialogProps = { title: string; active?: boolean; bar?: string; className: string; children: ReactNode };

function DialogFrame({ title, active, bar = 'h-[30px] pl-2 pr-2.5', className, children }: DialogProps)
{
    return (
        <section role="dialog" aria-label={title} className={`absolute flex flex-col border shadow-[0_4px_14px_rgba(0,0,0,0.35)] bg-linear-to-r from-white to-[#eeeeee] ${active ? 'border-[#5c5c5c]' : 'border-[#999999]'} ${className}`}>
            <header className={`shrink-0 flex items-center gap-[5px] bg-white ${bar}`}>
                <AbaqusMark />
                <h2 className={`flex-1 ${active ? 'text-black' : 'text-[#999]'}`}>{title}</h2>
                <button type="button" aria-label="Close" className={active ? 'text-black' : 'text-[#888]'}>
                    <svg className="w-[11px] h-[11px]" viewBox="0 0 11 11" aria-hidden="true"><path d="M.5.5l10 10M10.500.5l-10 10" stroke="currentColor" strokeWidth="1.200" /></svg>
                </button>
            </header>
            {children}
        </section>
    );
}

function MaterialManager()
{
    return (
        <DialogFrame title="Material Manager" className="left-[348px] top-[430px] w-[307px] h-[239px]">
            <div className="flex-1 flex justify-between pt-1 pb-1 pl-1 pr-[5px] bg-[#f2f2f2]">
                <div className="w-[224px] p-px border border-[#a0a0a0] bg-white">
                    <table className="w-full text-left">
                        <thead><tr className="h-[22px]"><th className="pl-1 py-0">Name</th></tr></thead>
                        <tbody><tr className="h-5 bg-[#0078d7] text-white"><td className="pl-1 py-0">Q235</td></tr></tbody>
                    </table>
                </div>
                <div className="flex flex-col gap-1.5 pt-px">
                    {['Create...', 'Edit...', 'Copy...', 'Rename...', 'Delete...', 'Evaluate...', 'Dismiss'].map((b) => <PushButton key={b} width="w-[63px]">{b}</PushButton>)}
                </div>
            </div>
        </DialogFrame>
    );
}

function SectionAssignment()
{
    return (
        <DialogFrame title="Edit Section Assignment" bar="h-[25px] pl-1 pr-2.5" className="left-[690px] top-[417px] w-[271px] h-[281px]">
            <fieldset className="mx-1 mt-[3px] h-[55px] border border-[#dcdcdc] pl-[7px]">
                <legend className="px-1 pt-1">Region</legend>
                <div className="flex items-center gap-2 h-6 mt-1">
                    <span>Region:</span>
                    <span>(Picked)</span>
                    <svg className="ml-1.5 w-3 h-4" viewBox="0 0 12 16" aria-hidden="true"><path d="M1 1v12l3-3 2 5 2-1-2-5h5z" fill="#fff" stroke="#2a60e0" strokeWidth="1.300" /></svg>
                </div>
            </fieldset>
            <fieldset className="mx-1 mt-1 h-[150px] border border-[#dcdcdc] pl-[7px]">
                <legend className="px-1 pt-1">Section</legend>
                <div className="flex items-center mt-1.5">
                    <label htmlFor="section" className="w-[49px]">Section:</label>
                    <Select id="section" value="Section-1" width="w-[159px]" />
                    <span className="ml-4 mb-1"><Icon size="sm">{icons.section}</Icon></span>
                </div>
                <div className="grid grid-cols-[41px_auto] mt-1.5 leading-[17px] whitespace-nowrap">
                    <b>Note:</b>
                    <p>List contains only sections<br />applicable to the selected regions.</p>
                </div>
                <dl className="grid grid-cols-[59px_auto] mt-1 leading-[25px]">
                    <dt>Type:</dt><dd>Solid, Homogeneous</dd>
                    <dt>Material:</dt><dd>Q235</dd>
                </dl>
            </fieldset>
            <div className="flex justify-between px-10 pt-3.5">
                <PushButton>OK</PushButton>
                <PushButton>Cancel</PushButton>
            </div>
        </DialogFrame>
    );
}

const behaviors = [
    { label: '&Elasticity', sub: true },
    { label: '&Plasticity', sub: true },
    { label: 'Damage for D&uctile Metals', sub: true },
    { label: 'Dama&ge for Traction Separation Laws', sub: true },
    { label: 'Damage for F&iber-Reinforced Composites', sub: true },
    { label: 'Damage for Elas&tomers', sub: true },
    { label: 'De&formation Plasticity', sub: false },
    { label: '&Damping', sub: false },
    { label: 'E&xpansion', sub: false },
    { label: '&Brittle Cracking', sub: false },
    { label: 'E&os', sub: false },
    { label: '&Viscosity', sub: false },
];

const elasticity = ['&Elastic', '&Hyperelastic', 'Hyper&foam', '&Low Density Foam', 'Hyp&oelastic', '&Porous Elastic', '&Viscoelastic'];

function BehaviorMenus()
{
    return (
        <div className="absolute left-[-1px] top-[25px] z-10 flex items-start whitespace-nowrap">
            <div role="menu" className="w-[286px] pb-0.5 px-0.5 border-l border-l-[#e4e4e4] border-r-2 border-b-2 border-r-[#707070] border-b-[#707070] bg-[#f0f0f0]">
                {behaviors.map((b, i) => (
                    <button key={b.label} type="button" role="menuitem" className={`w-full h-[22px] pl-[21px] pr-1 flex items-center justify-between ${i === 0 ? 'bg-[#0078d7] text-white' : ''}`}>
                        <Mnemonic text={b.label} />
                        {b.sub && <svg className="w-1.5 h-2 shrink-0" viewBox="0 0 6 8" aria-hidden="true"><path d="M0 0v8l6-4z" fill="currentColor" /></svg>}
                    </button>
                ))}
            </div>
            <div role="menu" className="w-[145px] pt-0.5 pb-px border-r-2 border-b-2 border-[#707070] bg-[#f0f0f0]">
                {elasticity.map((e, i) => (
                    <div key={e} className={i === 6 ? 'mt-px border-t border-[#a0a0a0]' : ''}>
                        <button type="button" role="menuitem" className={`w-full h-[22px] pl-[22px] text-left ${i === 0 ? 'bg-[#0078d7] text-white' : ''}`}><Mnemonic text={e} /></button>
                    </div>
                ))}
            </div>
        </div>
    );
}

function EditMaterial()
{
    const [name, setName] = useState('Material-2');
    return (
        <DialogFrame title="Edit Material" active className="left-[986px] top-[235px] w-[551px] h-[718px]">
            <div className="flex items-center mt-1 pl-1.5 pr-1">
                <label htmlFor="mat-name" className="w-[42px]">Name:</label>
                <input id="mat-name" value={name} onChange={(e) => setName(e.target.value)} className="flex-1 h-[25px] px-[3px] border border-[#a8a8a8] bg-white outline-none" />
            </div>
            <div className="flex mt-1 pl-1.5 pr-2">
                <label htmlFor="mat-desc" className="w-[75px] pt-[3px]">Description:</label>
                <textarea id="mat-desc" className="flex-1 h-[42px] border border-[#a8a8a8] bg-white resize-none outline-none" />
                <button type="button" aria-label="Edit description" className="ml-2.5 w-5">
                    <svg className="w-5 h-5" viewBox="0 0 20 20" aria-hidden="true">
                        <path d="M4 13L15 1l4 4L8 16z" fill="#f2b050" stroke="#a87028" /><path d="M15 1l4 4-2 2-4-4z" fill="#c89a60" /><path d="M6 13L15 4" stroke="#fbdc90" strokeWidth="1.500" /><path d="M4 13l4 3-6 3z" fill="#f4dcc0" /><path d="M1 19l2-3 2 2z" fill="#222" />
                    </svg>
                </button>
            </div>
            <fieldset className="mx-1 mt-0.5 h-[174px] border border-[#dcdcdc] px-[5px]">
                <legend className="ml-0.5 px-1 pt-1">Material Behaviors</legend>
                <div className="mt-[7px] h-[111px] border border-[#a8a8a8] bg-white" />
                <div className="flex items-center justify-between mt-1">
                    <div role="menubar" className="w-[502px] h-[27px] flex items-center gap-px border-b border-r border-[#a8a8a8]">
                        <button type="button" className="w-16 h-full"><Mnemonic text="&General" /></button>
                        <div className="relative w-[77px] h-full">
                            <button type="button" className="w-full h-full pt-0.5 border-t border-l border-[#8c8c8c]"><Mnemonic text="&Mechanical" /></button>
                            <BehaviorMenus />
                        </div>
                        <button type="button" className="px-2"><Mnemonic text="&Thermal" /></button>
                        <button type="button" className="px-2"><Mnemonic text="&Electrical/Magnetic" /></button>
                        <button type="button" className="px-2"><Mnemonic text="&Other" /></button>
                    </div>
                    <button type="button" aria-label="Delete behavior" className="w-[22px] h-[22px] border border-[#bdbdbd] bg-[#cccccc]">
                        <svg className="w-5 h-5" viewBox="0 0 20 20" aria-hidden="true"><path d="M6 11l3 2 6-5" fill="none" stroke="#999" strokeWidth="2" /><path d="M8 15l7-6" stroke="#eee" strokeWidth="1.500" /></svg>
                    </button>
                </div>
            </fieldset>
            <div className="mx-1 mt-1.5 flex-1 border border-[#dcdcdc]" />
            <div className="h-[38px] flex justify-between pt-2.5 px-[110px]">
                <PushButton>OK</PushButton>
                <PushButton>Cancel</PushButton>
            </div>
        </DialogFrame>
    );
}

const BrowserE = () => (
    <g><circle cx="12" cy="12" r="11" fill="#55b82c" /><circle cx="12" cy="12" r="9" stroke="#e8ffd8" /><path d="M6.500 12h11c0-7-10-7-11 0 0 7 8 7 10.500 3" stroke="#fff" strokeWidth="2.400" /></g>
);
const WeChat = () => (
    <g><ellipse cx="9" cy="9" rx="8.500" ry="7.500" fill="#22c468" /><path d="M4 14l-1 5 5-3z" fill="#22c468" /><circle cx="6" cy="7" r="1.200" fill="#0a6a34" /><circle cx="12" cy="7" r="1.200" fill="#0a6a34" /><ellipse cx="17" cy="16" rx="6.500" ry="5.500" fill="#f0f0f0" /><path d="M20 20l1 4-4-2z" fill="#f0f0f0" /><circle cx="15" cy="15" r="1" fill="#777" /><circle cx="19" cy="15" r="1" fill="#777" /></g>
);
const Penguin = ({ chat }: { chat?: boolean }) => (
    <g><path d="M12 0C7 0 5 4 5 8c-3 3-4 7-3 9 2 0 3-2 3-2 1 7 13 7 14 0 0 0 1 2 3 2 1-2 0-6-3-9 0-4-2-8-7-8z" fill="#0a0a0a" /><ellipse cx="12" cy="16" rx="5.500" ry="6" fill="#fff" /><circle cx="10" cy="5" r="2" fill="#fff" /><circle cx="14" cy="5" r="2" fill="#fff" /><path d="M8 8h8l-4 3z" fill="#f4b020" /><path d="M5 10c4 3 10 3 14 0v3c-4 2-10 2-14 0z" fill="#e02020" /><path d="M4 21h7v3H4zM13 21h7v3h-7z" fill="#f4a020" />{chat && <path d="M12 12h12v9h-6l-3 2v-2h-3z" fill="#f8c020" />}</g>
);

const taskItems: { name: string; box: string; running?: boolean; active?: boolean; art: ReactNode }[] = [
    { name: 'Start', box: 'w-[42px] -ml-3', art: <path d="M1 5l8-1.300V11.500H1zM10.500 3.500L21 2v9.500H10.500zM1 13h8v7.500L1 19.500zM10.500 13H21v9.500L10.500 21z" fill="#fff" /> },
    { name: 'Cortana', box: 'w-[53px]', art: <circle cx="12" cy="12" r="7.500" stroke="#fff" strokeWidth="2.200" /> },
    { name: 'Task View', box: 'w-10', art: <path d="M3 3v3h12V3M3 21v-3h12v3M3 9h12v6H3zM19.500 3v3M19.500 12v9M19.500 8v2" stroke="#fff" strokeWidth="1.500" /> },
    { name: 'Mesh', box: 'w-12 ml-1.5', running: true, art: <><path d="M4 7l16-4v13L3 21z" fill="#75799a" /><path d="M9 5v15M14 4v14M4 12l16-5M4 17l16-5" stroke="#a4a6c0" /></> },
    { name: 'Browser', box: 'w-12', running: true, art: <BrowserE /> },
    { name: 'Pen', box: 'w-12', running: true, art: <><path d="M0 0h20l4 4v20H0z" fill="#8a0a90" /><path d="M4 3c6 2 13 8 15 17C11 17 6 11 4 3z" fill="#fff" /><path d="M11 11l8 9" stroke="#8a0a90" /></> },
    { name: 'Explorer', box: 'w-12', running: true, art: <><path d="M1 2h8l2 3h12v15H1z" fill="#e8b030" /><path d="M1 6h22v16H1z" fill="#fcd468" /><path d="M6 13h12v9h-3v-4H9v4H6z" fill="#3a98e0" /></> },
    { name: 'Console', box: 'w-12', running: true, art: icons.console },
    { name: 'Abaqus', box: 'w-12', running: true, active: true, art: <><path d="M8 2h8v4l7 5H1l7-5zM8 22h8v-4l7-5H1l7 5z" fill="#7070b0" /><path d="M10-1h4v26h-4z" fill="#9090d0" /><path d="M0 10.800h24v2.400H0z" fill="#fff" /></> },
    { name: 'WeChat', box: 'w-12', running: true, art: <WeChat /> },
];

const trayItems: { name: string; art: ReactNode }[] = [
    { name: 'Hidden icons', art: <path d="M4 16l8-8 8 8" stroke="#fff" strokeWidth="1.800" /> },
    { name: 'Browser', art: <BrowserE /> },
    { name: 'Network', art: <><path d="M4 22C4 11 11 4 22 4M8 22c0-8 5-14 14-14M12 22c0-6 4-10 10-10M16 22c0-3 2-6 6-6" stroke="#ddd" strokeWidth="1.600" /><circle cx="20" cy="21" r="2" fill="#fff" /></> },
    { name: 'WeChat', art: <WeChat /> },
    { name: 'QQ messages', art: <Penguin chat /> },
    { name: 'QQ', art: <Penguin /> },
    { name: 'Volume', art: <><path d="M2 9h3l6-5v16l-6-5H2z" stroke="#fff" strokeWidth="1.500" /><path d="M14 9c1.500 2 1.500 4 0 6M17 6c3 4 3 8 0 12M20 4c4 5 4 11 0 16" stroke="#fff" strokeWidth="1.400" /></> },
];

function Taskbar()
{
    return (
        <footer className="h-10 shrink-0 flex overflow-hidden bg-linear-to-r from-[#20383f] via-[#20343f] to-[#1a2942]">
            {taskItems.map((t) => (
                <button key={t.name} type="button" aria-label={t.name} className={`relative h-full shrink-0 mr-px flex items-center justify-center ${t.box} ${t.active ? 'bg-[#4c6068]' : ''}`}>
                    <svg className="w-[22px] h-[22px] overflow-visible" viewBox="0 0 24 24" fill="none" aria-hidden="true">{t.art}</svg>
                    {t.running && <span className={`absolute bottom-0 h-0.5 bg-[#76b9ed] ${t.active ? 'inset-x-0' : 'inset-x-1'}`} />}
                </button>
            ))}
            <div className="ml-auto flex items-center gap-2 -mr-[5px] text-white">
                {trayItems.map((t) => (
                    <button key={t.name} type="button" aria-label={t.name} className="w-4 h-4"><svg className="w-4 h-4 overflow-visible" viewBox="0 0 24 24" fill="none" aria-hidden="true">{t.art}</svg></button>
                ))}
                <span className="w-4 text-center text-[13px] font-['Noto_Sans_CJK_SC',sans-serif]">中</span>
                <svg className="ml-1.5 w-5 h-5 shrink-0" viewBox="0 0 20 20" fill="none" aria-hidden="true">
                    <path d="M3 2l14-1 2 15-15 3z" fill="#f4511e" />
                    <path d="M14 5c-4-1-7 0-7 2s7 2 7 5-5 3-8 2" stroke="#fff" strokeWidth="2.400" />
                </svg>
            </div>
        </footer>
    );
}

export default function App()
{
    return (
        <div className="relative h-screen flex flex-col overflow-hidden bg-[#fafafa] text-black text-xs font-['Noto_Sans','Open_Sans',sans-serif]">
            <header className="h-6 shrink-0 flex items-center pl-2 bg-white text-[#9a9a9a]">
                <h1>Abaqus/CAE 6.14-1 - Model Database: G:\Abaqus_files\XIU\sliding.cae [Viewport: 1]</h1>
            </header>
            <nav className="h-[25px] shrink-0 flex items-center gap-px bg-linear-to-r from-white to-[#f0f0f0]">
                <svg className="w-1.5 h-3.5 shrink-0" viewBox="0 0 6 14" aria-hidden="true"><path d="M-2 .5h5.500v12H-2z" fill="#fff" stroke="#2a5ab0" /><path d="M-2 1h5.500v3H-2zM0 7h2M0 9h2" fill="#2a6ac0" stroke="#2a6ac0" /></svg>
                {mainMenu.map((m) => <button key={m} type="button" className="px-2"><Mnemonic text={m} /></button>)}
                <button type="button" aria-label="Context help" className="ml-1.5 flex items-center">
                    <svg className="w-3.5 h-3.5 overflow-visible" viewBox="0 0 14 14" aria-hidden="true"><path d="M1 1v10l2.500-2 2 4 1.500-1-2-4h3z" fill="#000" /><text x="6" y="10" fontSize="11" fontWeight="bold" fontFamily="DejaVu Sans, sans-serif">?</text></svg>
                </button>
            </nav>
            <Toolbars />
            <div className="flex-1 min-h-0 flex gap-[5px]">
                <ModelTree />
                <main className="flex-1 min-w-0 flex flex-col">
                    <div className="mt-1 h-7 shrink-0 flex items-start pl-2 bg-linear-to-b from-white to-[#ececec]">
                        <label htmlFor="module" className="w-[53px] leading-6">Module:</label>
                        <Select id="module" value="Property" width="w-28" spinner />
                        <label htmlFor="model" className="ml-[13px] w-[45px] leading-6">Model:</label>
                        <Select id="model" value="Model-F_S" width="w-[101px]" spinner />
                        <label htmlFor="part" className="ml-[13px] w-[30px] leading-6">Part:</label>
                        <Select id="part" value="box_shang" width="w-[101px]" spinner />
                    </div>
                    <div className="flex-1 min-h-0 flex">
                        <Toolbox />
                        <div className="flex-1 flex items-end border-t border-l border-b border-[#707070] border-b-[#a0a0a0] bg-white"><Triad /></div>
                    </div>
                    <div className="h-[33px] shrink-0 flex items-center gap-1 pl-[7px] bg-linear-to-b from-white to-[#ebebeb]">
                        <button type="button" aria-label="Back" className="w-[18px] h-6 border border-[#c0c0c0] bg-[#c8c8c8]">
                            <svg className="w-4 h-5" viewBox="0 0 16 20" aria-hidden="true"><path d="M1 10l6-5v3h8v4H7v3z" fill="#8a8a8a" /></svg>
                        </button>
                        <button type="button" aria-label="Cancel procedure" className="w-[18px] h-6 border border-[#adadad] bg-[#e1e1e1]">
                            <svg className="w-4 h-5" viewBox="0 0 16 20" aria-hidden="true"><path d="M3 4l10 12M13 4L3 16" stroke="#e01020" strokeWidth="2" /></svg>
                        </button>
                        <p className="pl-[3px]">Fill out the Edit Section Assignment dialog</p>
                    </div>
                </main>
            </div>
            <div className="h-[79px] shrink-0 flex pt-[5px] pb-[3px] bg-[#f4f4f4]">
                <div className="w-[26px] shrink-0 flex flex-col justify-between pt-2 bg-white">
                    <button type="button" aria-label="Messages" className="w-4 h-5 border border-l-0 border-[#444] bg-linear-to-r from-[#fafaf6] to-[#c8c8b8]">
                        <svg viewBox="0 0 14 18" aria-hidden="true"><path d="M-1 17l5-7 3 3-5 6z" fill="#d8c020" stroke="#222" /></svg>
                    </button>
                    <div className="w-6 h-[34px] flex items-center border border-l-0 border-[#d0d0d0] bg-[#f0f0f0]">
                        <button type="button" aria-label="Command line" className="w-[19px] h-6 border-2 border-l-0 border-black bg-[#e8d050]">
                            <svg viewBox="0 0 17 20" aria-hidden="true"><path d="M-1 6l3 4-3 4M5 6l3 4-3 4M11 6l3 4-3 4" fill="none" stroke="#000" strokeWidth="2" /></svg>
                        </button>
                    </div>
                </div>
                <div className="flex-1 pl-1 pt-[3px] border border-r-0 border-[#a0a0a0] bg-white font-['Liberation_Mono',monospace] text-[13px] leading-[13px]">
                    <p>A new model database has been created.</p>
                    <p>The model "Model-1" has been created.</p>
                    <p>The model database "G:\Abaqus_files\XIU\sliding.cae" has been opened.</p>
                </div>
            </div>
            <Taskbar />
            <MaterialManager />
            <SectionAssignment />
            <EditMaterial />
        </div>
    );
}
